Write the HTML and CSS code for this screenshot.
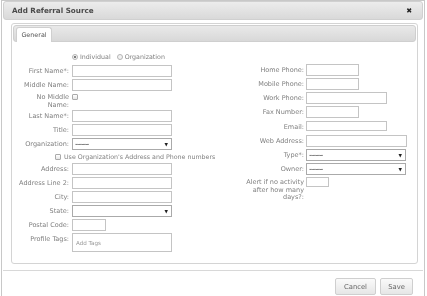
FILE: index.html
```html
<!DOCTYPE html>
<html>
<head>
<meta charset="utf-8">
<link rel="stylesheet" href="styles.css">
</head>
<body>
<div class="dialog">
  <div class="titlebar">
    <span class="title">Add Referral Source</span>
    <span class="close">✖</span>
  </div>
  <div class="content">
    <div class="panel">
      <div class="tabs"><div class="tab">General</div></div>
      <div class="tabbody">
        <div class="col left">
          <div class="radios">
            <span class="radio on"></span><span class="rlabel">Individual</span>
            <span class="radio"></span><span class="rlabel">Organization</span>
          </div>
          <div class="row"><span class="lbl">First Name*:</span><span class="inp w100"></span></div>
          <div class="row"><span class="lbl">Middle Name:</span><span class="inp w100"></span></div>
          <div class="row nomid"><span class="lbl two">No Middle<br>Name:</span><span class="check"></span></div>
          <div class="row"><span class="lbl">Last Name*:</span><span class="inp w100"></span></div>
          <div class="row"><span class="lbl">Title:</span><span class="inp w100"></span></div>
          <div class="row"><span class="lbl">Organization:</span><span class="inp sel w100"><span class="opt">----------</span><span class="arrow">▼</span></span></div>
          <div class="row useorg"><span class="check"></span><span class="clabel">Use Organization's Address and Phone numbers</span></div>
          <div class="row"><span class="lbl">Address:</span><span class="inp w100"></span></div>
          <div class="row"><span class="lbl">Address Line 2:</span><span class="inp w100"></span></div>
          <div class="row"><span class="lbl">City:</span><span class="inp w100"></span></div>
          <div class="row"><span class="lbl">State:</span><span class="inp sel w100"><span class="opt"></span><span class="arrow">▼</span></span></div>
          <div class="row"><span class="lbl">Postal Code:</span><span class="inp w34"></span></div>
          <div class="row"><span class="lbl">Profile Tags:</span><span class="inp w100 tags"><span class="ph">Add Tags</span></span></div>
        </div>
        <div class="col right">
          <div class="row"><span class="lbl">Home Phone:</span><span class="inp w53"></span></div>
          <div class="row"><span class="lbl">Mobile Phone:</span><span class="inp w53"></span></div>
          <div class="row"><span class="lbl">Work Phone:</span><span class="inp w81"></span></div>
          <div class="row"><span class="lbl">Fax Number:</span><span class="inp w53"></span></div>
          <div class="row email"><span class="lbl">Email:</span><span class="inp w81 short"></span></div>
          <div class="row"><span class="lbl">Web Address:</span><span class="inp w101"></span></div>
          <div class="row"><span class="lbl">Type*:</span><span class="inp sel w100"><span class="opt">----------</span><span class="arrow">▼</span></span></div>
          <div class="row"><span class="lbl">Owner:</span><span class="inp sel w100"><span class="opt">----------</span><span class="arrow">▼</span></span></div>
          <div class="row"><span class="lbl three">Alert if no activity<br>after how many<br>days?:</span><span class="inp w23 short"></span></div>
        </div>
      </div>
    </div>
  </div>
  <div class="footer">
    <span class="btn cancel">Cancel</span>
    <span class="btn save">Save</span>
  </div>
</div>
</body>
</html>
```
FILE: styles.css
```css
html, body {
  margin: 0;
  padding: 0;
  background: #ffffff;
}
body {
  font-family: "DejaVu Sans", Verdana, sans-serif;
  color: #777;
}
.dialog {
  box-sizing: border-box;
  width: 424px;
  height: 296px;
  margin-left: 1px;
  border: 1px solid #c8c8c8;
  border-bottom: none;
  padding: 0 1px;
  display: flex;
  flex-direction: column;
  background: #fff;
  filter: grayscale(100%);
}
.titlebar {
  box-sizing: border-box;
  height: 19px;
  border: 1px solid #d0d0d0;
  border-radius: 3px;
  background: linear-gradient(#ececec, #d9d9d9);
  display: flex;
  align-items: center;
  justify-content: space-between;
  padding: 0 10px 0 8px;
}
.title {
  font-weight: bold;
  font-size: 7.2px;
  color: #4a4a4a;
}
.close {
  font-size: 7px;
  color: #222;
}
.content {
  padding: 3px 5px 0 8px;
}
.panel {
  box-sizing: border-box;
  height: 241px;
  border: 1px solid #d4d4d4;
  border-radius: 3px;
  padding: 1px;
}
.tabs {
  box-sizing: border-box;
  height: 17px;
  border: 1px solid #cfcfcf;
  border-radius: 3px;
  background: linear-gradient(#e9e9e9, #d8d8d8);
  padding: 2px 0 0 2px;
  display: flex;
  align-items: flex-end;
}
.tab {
  box-sizing: border-box;
  height: 15px;
  width: 36px;
  margin-bottom: -1px;
  background: #fff;
  border: 1px solid #cfcfcf;
  border-bottom: none;
  border-radius: 3px 3px 0 0;
  font-size: 6.4px;
  color: #555;
  display: flex;
  align-items: center;
  justify-content: center;
}
.tabbody {
  display: flex;
  padding-top: 10px;
}
.col {
  display: flex;
  flex-direction: column;
}
.left {
  width: 231px;
}
.right {
  padding-top: 12px;
}
.row {
  display: flex;
  align-items: flex-start;
  margin-bottom: 2px;
}
.lbl {
  box-sizing: border-box;
  font-size: 6.5px;
  line-height: 12px;
  text-align: right;
  white-space: nowrap;
  color: #808080;
}
.left .lbl {
  width: 56px;
  margin-right: 3px;
}
.right .lbl {
  width: 60px;
  margin-right: 2px;
}
.lbl.two, .lbl.three {
  line-height: 7.6px;
  padding-top: 1px;
}
.lbl.three {
  padding-top: 2px;
}
.inp {
  box-sizing: border-box;
  height: 12px;
  border: 1px solid #c4c4c4;
  background: #fff;
  display: flex;
  align-items: center;
}
.inp.short {
  height: 10px;
}
.w100 { width: 100px; }
.w101 { width: 101px; }
.w81 { width: 81px; }
.w53 { width: 53px; }
.w34 { width: 34px; }
.w23 { width: 23px; }
.sel {
  justify-content: space-between;
  padding: 0 3px 0 2px;
  border-color: #aaa;
}
.opt {
  font-size: 6.5px;
  letter-spacing: -1px;
  color: #333;
}
.arrow {
  font-size: 4.5px;
  color: #222;
}
.tags {
  height: 19px;
  align-items: center;
  padding-left: 3px;
}
.ph {
  font-size: 5.6px;
  color: #999;
}
.radios {
  display: flex;
  align-items: center;
  height: 9px;
  margin-bottom: 4px;
  padding-left: 59px;
}
.radio {
  box-sizing: border-box;
  width: 6px;
  height: 6px;
  border-radius: 50%;
  border: 1px solid #b5b5b5;
  background: #f2f2f2;
  margin-right: 2px;
  position: relative;
}
.radio.on::after {
  content: "";
  position: absolute;
  left: 1px;
  top: 1px;
  width: 2px;
  height: 2px;
  border-radius: 50%;
  background: #555;
}
.rlabel {
  font-size: 6.3px;
  margin-right: 6px;
  color: #808080;
}
.check {
  box-sizing: border-box;
  width: 6px;
  height: 6px;
  border: 1px solid #aaa;
  border-radius: 1px;
  background: linear-gradient(#fff, #e6e6e6);
}
.nomid {
  height: 15px;
}
.nomid .check {
  margin-top: 1px;
}
.useorg {
  height: 9px;
  align-items: center;
  padding-left: 42px;
}
.useorg .check {
  margin-right: 3px;
}
.clabel {
  font-size: 6.3px;
  white-space: nowrap;
  color: #808080;
}
.email {
  margin-top: 1px;
}
.footer {
  margin-top: 6px;
  border-top: 1px solid #d8d8d8;
  display: flex;
  justify-content: flex-end;
  padding: 7px 10px 0 0;
  gap: 4px;
}
.btn {
  box-sizing: border-box;
  height: 17px;
  border: 1px solid #cfcfcf;
  border-radius: 2px;
  background: linear-gradient(#fafafa, #e6e6e6);
  font-size: 6.8px;
  color: #666;
  display: flex;
  align-items: center;
  justify-content: center;
}
.cancel { width: 41px; }
.save { width: 33px; }
```
